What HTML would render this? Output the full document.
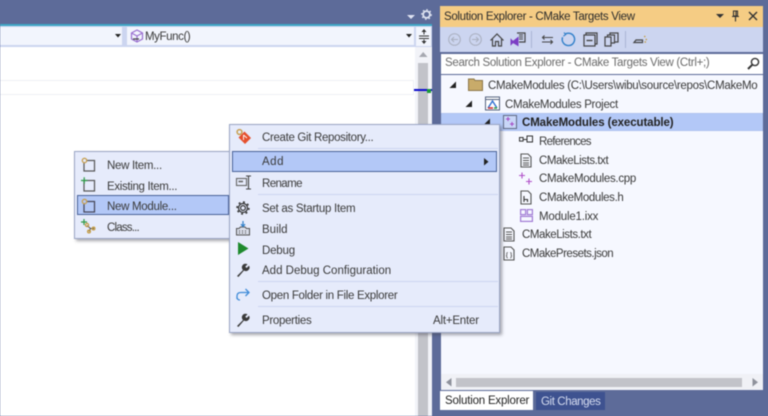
<!DOCTYPE html>
<html><head><meta charset="utf-8"><style>
html,body{margin:0;padding:0;width:768px;height:416px;overflow:hidden;background:#5d6b99}
#r{position:absolute;left:0;top:0;width:768px;height:416px;overflow:hidden;font-family:"Liberation Sans",sans-serif;font-size:11.5px;color:#3a3a3a;filter:blur(.4px)}
#r div,#r svg{position:absolute}
.t{white-space:nowrap;line-height:16px;height:16px}
svg{overflow:visible}
.sep{height:1px;background:#ccd5f0}
</style></head><body><div id="r">
<!-- editor -->
<div style="left:0;top:24px;width:432px;height:2px;background:#3fa6c4"></div>
<div style="left:0;top:26px;width:432px;height:21px;background:#ccd5f0"></div>
<div style="left:0;top:27px;width:122px;height:18px;background:#f2f5fd"></div>
<div style="left:127px;top:27px;width:287px;height:18px;background:#f2f5fd"></div>
<svg style="left:115px;top:34px" width="6" height="4"><path d="M0 0H6L3 3.5Z" fill="#222"/></svg>
<svg style="left:406px;top:34px" width="6" height="4"><path d="M0 0H6L3 3.5Z" fill="#222"/></svg>
<svg style="left:130px;top:29px" width="14" height="14" fill="none"><path d="M7 1L12.5 4V10L7 13L1.5 10V4Z M1.5 4L7 7L12.5 4M7 7V13" stroke="#9a6fd0" stroke-width="1.2"/><path d="M3 10H9" stroke="#444" stroke-width="1.3"/></svg>
<div class="t" style="left:145px;top:29px;letter-spacing:-.4px">MyFunc()</div>
<div style="left:416px;top:27px;width:15px;height:19px;background:#f2f5fd"></div>
<svg style="left:418px;top:29px" width="12" height="15" fill="#333"><path d="M1 6.5H11V7.5H1ZM1 9H11V10H1Z"/><path d="M6 0L8.5 3H6.5V5.5H5.5V3H3.5ZM6 15L8.5 12H6.5V10.5H5.5V12H3.5Z"/></svg>
<div style="left:0;top:47px;width:415px;height:369px;background:#fff"></div>
<div style="left:0;top:80px;width:414px;height:15px;box-sizing:border-box;border:1.5px solid #eef0f4;border-left:0"></div>
<div style="left:415px;top:47px;width:17px;height:369px;background:#f2f3f8"></div>
<div style="left:418px;top:63px;width:10px;height:353px;background:#c2c3c9"></div>
<svg style="left:419px;top:52px" width="9" height="6"><path d="M0 5H8.5L4.2 0Z" fill="#a6a8b0"/></svg>
<div style="left:414px;top:89px;width:18px;height:1.5px;background:#0c0ccc"></div>
<div style="left:427px;top:89px;width:4px;height:4px;background:#1c9a3a"></div>
<!-- top right icons -->
<svg style="left:407px;top:15px" width="9" height="5"><path d="M0 0H8L4 4Z" fill="#dfe4f2"/></svg>
<svg style="left:421px;top:9px" width="11" height="11" fill="none"><circle cx="5.5" cy="5.5" r="3.4" stroke="#dfe4f2" stroke-width="1.8"/><circle cx="5.5" cy="5.5" r="4.8" stroke="#dfe4f2" stroke-width="1.2" stroke-dasharray="1.6 2.1"/></svg>
<!-- solution explorer -->
<div style="left:440px;top:6px;width:323px;height:21px;background:#f5cc84"></div>
<div class="t" style="left:444px;top:9px;color:#2b2b2b;letter-spacing:-.32px">Solution Explorer - CMake Targets View</div>
<svg style="left:716px;top:14px" width="9" height="5"><path d="M0 0H8L4 4Z" fill="#333"/></svg>
<svg style="left:731px;top:10px" width="9" height="12" fill="none" stroke="#333"><path d="M2.5 1H6.5V6H2.5ZM5 1.5V6M1 6.5H8M4.5 7V11.5" stroke-width="1.1"/></svg>
<svg style="left:748px;top:11px" width="10" height="10" fill="none" stroke="#333" stroke-width="1.4"><path d="M1 1L9 9M9 1L1 9"/></svg>
<div style="left:440px;top:27px;width:323px;height:25px;background:#ccd5f0"></div>
<svg style="left:448px;top:33px" width="13" height="13" fill="none" stroke="#a9afbf"><circle cx="6.5" cy="6.5" r="5.8"/><path d="M10 6.5H3.5M6 4L3.5 6.5L6 9"/></svg>
<svg style="left:469px;top:33px" width="13" height="13" fill="none" stroke="#a9afbf"><circle cx="6.5" cy="6.5" r="5.8"/><path d="M3 6.5H9.5M7 4L9.5 6.5L7 9"/></svg>
<svg style="left:490px;top:33px" width="14" height="14" fill="none" stroke="#444" stroke-width="1.2"><path d="M.5 7.5L7 1L13.5 7.5M2.5 6V13H5.5V8.5H8.5V13H11.5V6"/></svg>
<svg style="left:510px;top:32px" width="16" height="15" fill="none"><path d="M7 1H15V10H9" stroke="#444" stroke-width="1.2"/><path d="M9 3H13M9 5H13M9 7H13" stroke="#444"/><path d="M1 7.5L3 9.5L8 5.5V13.5L3 10.5L1 12.5Z" fill="#7b3dc4" stroke="#7b3dc4"/></svg>
<div style="left:531px;top:31px;width:1px;height:17px;background:#aab4d4"></div>
<svg style="left:541px;top:35px" width="13" height="10" fill="none" stroke="#444" stroke-width="1.1"><path d="M12 2.5H1.5M3.5 .5L1.5 2.5L3.5 4.5M1 7H11.5M9.5 5L11.5 7L9.5 9"/></svg>
<svg style="left:561px;top:32px" width="15" height="15" fill="none" stroke="#2f7fc9" stroke-width="1.4"><path d="M4 2.2A6.2 6.2 0 1 1 1.6 5.2"/><path d="M3 .5L4.6 2.6L2.4 4.2" stroke-width="1.1"/></svg>
<svg style="left:583px;top:32px" width="15" height="15" fill="none" stroke="#444" stroke-width="1.2"><path d="M3 3V1H14V12H12"/><rect x="1" y="3" width="11" height="11"/><path d="M3.5 8.5H9.5" stroke-width="1.4"/></svg>
<svg style="left:604px;top:32px" width="15" height="15" fill="none" stroke="#444" stroke-width="1.2"><rect x="6" y="1" width="8" height="9"/><rect x="3.5" y="3" width="7" height="8" fill="#ccd5f0"/><rect x="1" y="5" width="6" height="9" fill="#ccd5f0"/></svg>
<div style="left:625px;top:31px;width:1px;height:17px;background:#aab4d4"></div>
<svg style="left:633px;top:35px" width="15" height="9" fill="none"><path d="M1 7.5H9.5V5H3Z" stroke="#444" stroke-width="1.2"/><path d="M11 1.5H12.5M12.5 4.5H14M11.5 7H13" stroke="#c49a3c" stroke-width="1.2"/></svg>
<div style="left:441px;top:54px;width:322px;height:20px;background:#fff"></div>
<div class="t" style="left:445px;top:55px;color:#6b6b6b;letter-spacing:-.31px">Search Solution Explorer - CMake Targets View (Ctrl+;)</div>
<svg style="left:747px;top:57px" width="13" height="13" fill="none" stroke="#333"><circle cx="8" cy="5" r="3.6" stroke-width="1.4"/><path d="M5.2 7.8L1 12" stroke-width="2"/></svg>
<!-- tree -->
<div style="left:441px;top:75px;width:322px;height:299px;background:#f6f8ff"></div>
<div style="left:441px;top:113px;width:322px;height:18px;background:#b3c8f7;box-shadow:inset 0 0 0 .5px #a8bde8"></div>
<svg style="left:449px;top:81px" width="8" height="8"><path d="M7 .5V7H.5Z" fill="#222"/></svg>
<svg style="left:465px;top:100px" width="8" height="8"><path d="M7 .5V7H.5Z" fill="#222"/></svg>
<svg style="left:483px;top:118px" width="8" height="8"><path d="M7 .5V7H.5Z" fill="#222"/></svg>
<svg style="left:468px;top:78px" width="15" height="13"><path d="M.5 1H6L7 2.5H14.5V12.5H.5Z" fill="#c8ab6a" stroke="#8c7748"/></svg>
<svg style="left:485px;top:96px" width="15" height="15" fill="none"><rect x=".5" y="1" width="14" height="13" fill="#fff" stroke="#54627f"/><path d="M.5 3.5H14.5" stroke="#54627f"/><path d="M3 12L7.5 5L12 12" stroke="#2f6fd0" stroke-width="1.4"/><path d="M3 12H8" stroke="#d03030" stroke-width="1.6"/><path d="M9 12H12" stroke="#38a048" stroke-width="1.6"/></svg>
<svg style="left:503px;top:115px" width="14" height="14" fill="none"><rect x=".5" y=".5" width="13" height="13" stroke="#606a84" fill="#c8d6f8"/><path d="M3 4H7M5 2V6M7 9H11M9 7V11" stroke="#a54bc4" stroke-width="1.1"/></svg>
<svg style="left:519px;top:135px" width="14" height="9" fill="none" stroke="#333"><rect x=".5" y="2.5" width="3.6" height="3.6"/><rect x="8" y="1" width="5.5" height="6"/><path d="M4 4.5H8"/></svg>
<svg style="left:520px;top:153px" width="12" height="15" fill="none" stroke="#555" stroke-width="1.1"><path d="M1 1H8L11 4V14H1Z"/><path d="M3 5H9M3 7.5H9M3 10H9M3 12H9" stroke-width=".9"/></svg>
<svg style="left:519px;top:172px" width="14" height="13" fill="none" stroke="#b04fc8" stroke-width="1.1"><path d="M0 3.5H6M3 .5V6.5M7 9.5H13M10 6.5V12.5"/></svg>
<svg style="left:520px;top:190px" width="12" height="15" fill="none" stroke="#555" stroke-width="1.1"><path d="M1 1H8L11 4V14H1Z"/><path d="M4 6V12M4 9.5H7.5V12" stroke="#333"/></svg>
<svg style="left:520px;top:209px" width="13" height="13" fill="none" stroke="#a07ad4" stroke-width="1.2"><rect x=".6" y=".6" width="5" height="5"/><rect x="7.4" y=".6" width="5" height="5"/><rect x=".6" y="7.4" width="11.8" height="5"/></svg>
<svg style="left:503px;top:227px" width="12" height="15" fill="none" stroke="#555" stroke-width="1.1"><path d="M1 1H8L11 4V14H1Z"/><path d="M3 5H9M3 7.5H9M3 10H9M3 12H9" stroke-width=".9"/></svg>
<svg style="left:503px;top:246px" width="12" height="15" fill="none" stroke="#555" stroke-width="1.1"><path d="M1 1H8L11 4V14H1Z"/><path d="M4.8 6.5Q3.6 6.5 3.8 8V9Q3.8 9.8 3 9.8Q3.8 9.8 3.8 10.5V11Q3.8 12 4.8 12M7.2 6.5Q8.4 6.5 8.2 8V9Q8.2 9.8 9 9.8Q8.2 9.8 8.2 10.5V11Q8.2 12 7.2 12" stroke-width=".8"/></svg>
<div class="t" style="left:488px;top:78px;width:275px;overflow:hidden;letter-spacing:-.3px">CMakeModules (C:\Users\wibu\source\repos\CMakeMo</div>
<div class="t" style="left:505px;top:97px;letter-spacing:-.3px">CMakeModules Project</div>
<div class="t" style="left:522px;top:115px;font-weight:bold;color:#222;letter-spacing:-.1px">CMakeModules (executable)</div>
<div class="t" style="left:539px;top:134px;letter-spacing:-.7px">References</div>
<div class="t" style="left:539px;top:153px;letter-spacing:-.44px">CMakeLists.txt</div>
<div class="t" style="left:539px;top:171px;letter-spacing:-.29px">CMakeModules.cpp</div>
<div class="t" style="left:539px;top:190px;letter-spacing:-.36px">CMakeModules.h</div>
<div class="t" style="left:539px;top:209px;letter-spacing:-.2px">Module1.ixx</div>
<div class="t" style="left:522px;top:227px;letter-spacing:-.44px">CMakeLists.txt</div>
<div class="t" style="left:522px;top:246px;letter-spacing:-.5px">CMakePresets.json</div>
<!-- scroll + tabs -->
<div style="left:441px;top:374px;width:322px;height:16px;background:#f0f1f6"></div>
<div style="left:456px;top:378px;width:286px;height:9px;background:#c2c3c9"></div>
<svg style="left:446px;top:378px" width="6" height="9"><path d="M5.5 0V8.5L0 4.2Z" fill="#8f929c"/></svg>
<svg style="left:752px;top:378px" width="6" height="9"><path d="M.5 0V8.5L6 4.2Z" fill="#8f929c"/></svg>
<div style="left:440px;top:391px;width:93px;height:19px;background:#fff"></div>
<div class="t" style="left:445px;top:393px;color:#222;letter-spacing:-.2px">Solution Explorer</div>
<div style="left:536px;top:392px;width:69px;height:18px;background:#3e5290"></div>
<div class="t" style="left:541px;top:394px;color:#d5dcf0;letter-spacing:-.4px">Git Changes</div>
<!-- submenu -->
<div style="left:74px;top:151px;width:158px;height:88px;box-sizing:border-box;background:#e6ebfb;border:1px solid #9aa5c4;box-shadow:2px 2px 3px rgba(60,60,70,.45)"></div>
<div style="left:77px;top:195px;width:152px;height:20px;box-sizing:border-box;background:#b3c8f7;border:1px solid #4a6399"></div>
<svg style="left:81px;top:157px" width="15" height="15" fill="none"><rect x="3" y="3.5" width="10.5" height="10.5" stroke="#555" stroke-width="1.2" fill="#e6ebfb"/><circle cx="3.5" cy="3.5" r="2.2" stroke="#c8a050" stroke-width="1.3" fill="#e6ebfb"/></svg>
<svg style="left:81px;top:177px" width="15" height="15" fill="none"><rect x="3" y="3.5" width="10.5" height="10.5" stroke="#555" stroke-width="1.2" fill="#e6ebfb"/><path d="M0 3.5H6.5M3.2 .3V6.7" stroke="#2e9a46" stroke-width="1.2"/></svg>
<svg style="left:81px;top:198px" width="15" height="15" fill="none"><rect x="3" y="3.5" width="10.5" height="10.5" stroke="#445" stroke-width="1.2" fill="#b3c8f7"/><circle cx="3.5" cy="3.5" r="2.2" stroke="#c8a050" stroke-width="1.3" fill="#b3c8f7"/></svg>
<svg style="left:81px;top:219px" width="15" height="15" fill="none"><path d="M0 3H6M3 0V6" stroke="#2e9a46" stroke-width="1.2"/><path d="M6 6.5L9.5 9.5H13M9.5 9.5L8 12.5" stroke="#555"/><circle cx="6" cy="6" r="1.6" stroke="#c59a3c" stroke-width="1.2"/><circle cx="12.5" cy="9.5" r="1.4" stroke="#c59a3c" stroke-width="1.2"/><circle cx="8" cy="12.5" r="1.4" stroke="#c59a3c" stroke-width="1.2"/></svg>
<div class="t" style="left:107px;top:158px;letter-spacing:-.3px">New Item...</div>
<div class="t" style="left:107px;top:179px;letter-spacing:-.33px">Existing Item...</div>
<div class="t" style="left:107px;top:199px;letter-spacing:-.3px">New Module...</div>
<div class="t" style="left:107px;top:220px;letter-spacing:-.8px">Class...</div>
<!-- main menu -->
<div style="left:229px;top:124px;width:271px;height:209px;box-sizing:border-box;background:#e6ebfb;border:1px solid #9aa5c4;box-shadow:2px 2px 3px rgba(60,60,70,.45)"></div>
<div style="left:232px;top:151px;width:265px;height:21px;box-sizing:border-box;background:#b3c8f7;border:1px solid #4a6399"></div>
<div class="sep" style="left:258px;top:148px;width:240px"></div>
<div class="sep" style="left:258px;top:194px;width:240px"></div>
<div class="sep" style="left:258px;top:281px;width:240px"></div>
<div class="sep" style="left:258px;top:306px;width:240px"></div>
<svg style="left:235px;top:128px" width="17" height="16"><circle cx="4.5" cy="4" r="2.4" fill="none" stroke="#c8a050" stroke-width="1.5"/><path d="M9.5 3.5L16 10L10 16L3.5 9.5Z" fill="#e5502d"/><path d="M8.5 7V12M8.5 7L12 10" stroke="#fff" stroke-width=".9"/></svg>
<svg style="left:236px;top:175px" width="16" height="15" fill="none" stroke="#666"><rect x=".5" y="3.5" width="10" height="7" stroke-width="1.1"/><path d="M2.5 6.5H7" stroke-width="1.6"/><path d="M10 1H15M12.5 1V14M10 14H15" stroke="#444" stroke-width="1.1" fill="#e6ebfb"/></svg>
<svg style="left:236px;top:201px" width="14" height="14" fill="none" stroke="#333"><circle cx="7" cy="7" r="2.4" stroke-width="1.2"/><circle cx="7" cy="7" r="4.5" stroke-width="1.2"/><circle cx="7" cy="7" r="5.9" stroke-width="1.6" stroke-dasharray="1.9 2.7"/></svg>
<svg style="left:236px;top:221px" width="14" height="15" fill="none"><path d="M.5 7.5H3L4.5 6H9L10.5 7.5H13.5V14H.5Z" fill="#d8dce8" stroke="#555"/><path d="M3 10H4M6 10H7M9 10H10M3 12H4M6 12H7M9 12H10" stroke="#444"/><path d="M7 0V5M5 3.2L7 5.5L9 3.2" stroke="#2f7fc9" stroke-width="1.2"/></svg>
<svg style="left:238px;top:242px" width="11" height="13"><path d="M0 0L10.5 6.5L0 13Z" fill="#1f8a2e"/></svg>
<svg style="left:236px;top:263px" width="14" height="14"><path d="M1 13L7 7A3.6 3.6 0 0 1 11.5 1.4L9.2 3.6L10.6 5L13 2.6A3.6 3.6 0 0 1 8 7.5L2.4 14Z" fill="#3a3a3a"/></svg>
<svg style="left:236px;top:288px" width="14" height="13" fill="none" stroke="#3f8bd8" stroke-width="1.3"><path d="M1 11V8Q1 4.5 5 4.5H13M9.5 1L13 4.5L9.5 8M1 9Q1 12 4 12" /></svg>
<svg style="left:236px;top:313px" width="14" height="14"><path d="M1 13L7 7A3.6 3.6 0 0 1 11.5 1.4L9.2 3.6L10.6 5L13 2.6A3.6 3.6 0 0 1 8 7.5L2.4 14Z" fill="#3a3a3a"/></svg>
<div class="t" style="left:262px;top:130px;letter-spacing:-.33px">Create Git Repository...</div>
<div class="t" style="left:262px;top:154px;letter-spacing:.5px">Add</div>
<svg style="left:484px;top:158px" width="5" height="8"><path d="M0 0V7.5L4.5 3.7Z" fill="#222"/></svg>
<div class="t" style="left:262px;top:176px;letter-spacing:-.6px">Rename</div>
<div class="t" style="left:262px;top:201px;letter-spacing:-.27px">Set as Startup Item</div>
<div class="t" style="left:262px;top:222px">Build</div>
<div class="t" style="left:262px;top:243px;letter-spacing:-.2px">Debug</div>
<div class="t" style="left:262px;top:263px">Add Debug Configuration</div>
<div class="t" style="left:262px;top:288px;letter-spacing:-.3px">Open Folder in File Explorer</div>
<div class="t" style="left:262px;top:313px;letter-spacing:-.3px">Properties</div>
<div class="t" style="left:433px;top:313px;letter-spacing:-.2px">Alt+Enter</div>
</div></body></html>
